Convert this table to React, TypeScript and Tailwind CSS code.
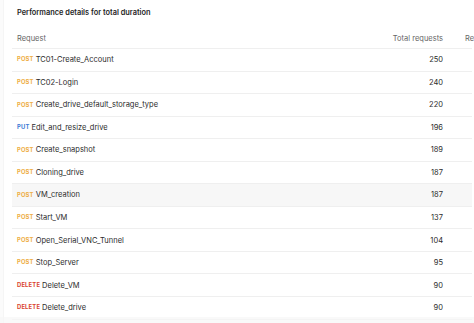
import React from "react";

type Row = { m: "POST" | "PUT" | "DELETE"; name: string; n: number; hover?: boolean };

const rows: Row[] = [
  { m: "POST", name: "TC01-Create_Account", n: 250 },
  { m: "POST", name: "TC02-Login", n: 240 },
  { m: "POST", name: "Create_drive_default_storage_type", n: 220 },
  { m: "PUT", name: "Edit_and_resize_drive", n: 196 },
  { m: "POST", name: "Create_snapshot", n: 189 },
  { m: "POST", name: "Cloning_drive", n: 187 },
  { m: "POST", name: "VM_creation", n: 187, hover: true },
  { m: "POST", name: "Start_VM", n: 137 },
  { m: "POST", name: "Open_Serial_VNC_Tunnel", n: 104 },
  { m: "POST", name: "Stop_Server", n: 95 },
  { m: "DELETE", name: "Delete_VM", n: 90 },
  { m: "DELETE", name: "Delete_drive", n: 90 },
];

function Method({ m }: { m: Row["m"] }) {
  const cls =
    m === "POST"
      ? "text-[#eeae45]"
      : m === "PUT"
      ? "text-[#3f7bd6]"
      : "text-[#d9422f]";
  return <span className={`text-[5.8px] font-bold tracking-[0.2px] mr-[2px] ${cls}`}>{m}</span>;
}

export default function App() {
  return (
    <div
      className="w-[474px] h-[323px] overflow-hidden bg-white relative"
      style={{ fontFamily: "Inter, 'Noto Sans', sans-serif" }}
    >
      <div className="absolute left-0 top-0 bottom-0 w-[4px] bg-[#fbfbfb] border-r border-[#f5f5f5]" />
      <div className="pt-[7px] pl-[17px] h-[28px] text-[7.4px] font-semibold text-[#1f1f1f] leading-[12px]">
        Performance details for total duration
      </div>
      <div className="ml-[12px] w-[460px]">
        <div className="flex h-[21px] pt-[1px] items-center border-b border-[#efefef] text-[7.5px] text-[#666] whitespace-nowrap">
          <div className="w-[350px] pl-[5px] shrink-0">Request</div>
          <div className="w-[92px] pr-[11px] text-right shrink-0">Total requests</div>
          <div className="w-[9px] pl-0 ml-[11px] shrink-0 overflow-hidden">Re</div>
        </div>
        {rows.map((r, i) => (
          <div
            key={i}
            className={`flex h-[22.55px] items-center border-b border-[#efefef] text-[7.5px] text-[#2b2b2b] whitespace-nowrap ${
              r.hover ? "bg-[#f7f7f7]" : ""
            }`}
          >
            <div className="w-[350px] pl-[5px] shrink-0 flex items-center">
              <Method m={r.m} />
              <span>{r.name}</span>
            </div>
            <div className="w-[92px] pr-[11px] text-right shrink-0">{r.n}</div>
          </div>
        ))}
      </div>
      <div className="absolute left-0 right-0 top-[317px] bottom-0 bg-[#f7f7f7] opacity-70" />
    </div>
  );
}
